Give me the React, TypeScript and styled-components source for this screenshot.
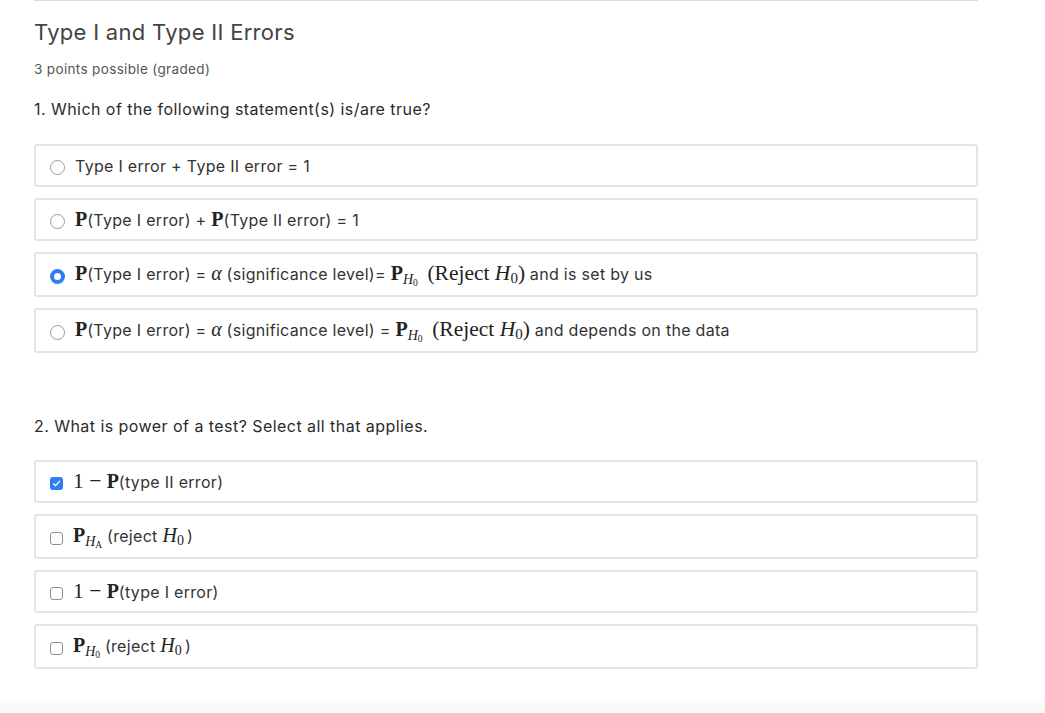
import React from 'react';
import styled, { createGlobalStyle } from 'styled-components';

const GlobalStyle = createGlobalStyle`
  html, body {
    margin: 0;
    padding: 0;
    background: #fff;
  }
  body {
    font-family: Inter, "Open Sans", "Liberation Sans", sans-serif;
    color: #333;
  }
`;

const Page = styled.div`
  width: 1045px;
  min-height: 713px;
  display: flex;
  flex-direction: column;
`;

const Problem = styled.div`
  width: 944px;
  margin-left: 34px;
  border-top: 1px solid #dcdcdc;
  padding-top: 17px;
  flex: 1;
`;

const Title = styled.h2`
  margin: 0;
  font-size: 22px;
  font-weight: 400;
  letter-spacing: 0.3px;
  line-height: 28px;
  color: #444;
`;

const Points = styled.div`
  margin-top: 14px;
  font-size: 13.5px;
  letter-spacing: 0.35px;
  line-height: 18px;
  color: #555;
`;

const Question = styled.p<{ $top: number }>`
  margin: ${({ $top }) => $top}px 0 0;
  font-size: 16px;
  letter-spacing: 0.45px;
  line-height: 20px;
  color: #2b2b2b;
`;

const Choices = styled.div<{ $top: number }>`
  margin-top: ${({ $top }) => $top}px;
  display: flex;
  flex-direction: column;
  gap: 11px;
`;

const Choice = styled.label<{ $tall?: boolean }>`
  display: flex;
  align-items: center;
  gap: 10px;
  box-sizing: border-box;
  height: ${({ $tall }) => ($tall ? 45 : 43)}px;
  padding: 0 14px;
  border: 2px solid #e4e4e4;
  border-radius: 3px;
  font-size: 16px;
  letter-spacing: 0.3px;
  color: #333;
  cursor: pointer;
`;

const Radio = styled.span<{ $on?: boolean }>`
  flex: none;
  box-sizing: border-box;
  width: 15px;
  height: 15px;
  border-radius: 50%;
  border: ${({ $on }) => ($on ? '4.5px solid #2f7cf6' : '1px solid #9a9a9a')};
  background: #fff;
  margin-top: 3px;
`;

const Box = styled.span<{ $on?: boolean }>`
  flex: none;
  box-sizing: border-box;
  width: 13px;
  height: 13px;
  border-radius: 3px;
  border: ${({ $on }) => ($on ? 'none' : '1px solid #8f8f8f')};
  background: ${({ $on }) => ($on ? '#2f7cf6' : '#fff')};
  display: flex;
  align-items: center;
  justify-content: center;
  margin-top: 4px;
`;

const Text = styled.span`
  display: block;
  white-space: pre;
  line-height: 24px;
`;

const M = styled.span<{ $big?: boolean }>`
  font-family: "Liberation Serif", "DejaVu Serif", serif;
  font-size: ${({ $big }) => ($big ? 21.5 : 20)}px;
  letter-spacing: 0;
  color: #222;
`;

const Bold = styled(M)`
  font-weight: 700;
`;

const It = styled(M)`
  font-style: italic;
`;

const Sub = styled.span`
  font-family: "Liberation Serif", "DejaVu Serif", serif;
  font-size: 14px;
  letter-spacing: 0;
  position: relative;
  top: 4px;
  color: #222;
`;

const SubIt = styled.span`
  font-style: italic;
`;

const Tiny = styled.span`
  font-size: 9.5px;
  font-style: normal;
  position: relative;
  top: 2px;
`;

const Zero = styled(M)`
  font-size: ${({ $big }) => ($big ? 15 : 14)}px;
  position: relative;
  top: 3px;
`;

const Footer = styled.div`
  height: 15px;
  background: linear-gradient(#fdfdfd, #f8f8f8);
`;

const Check = () => (
  <svg width="9" height="9" viewBox="0 0 10 10">
    <path d="M1.8 5.2 L4 7.4 L8.3 2.6" fill="none" stroke="#fff" strokeWidth="1.5" strokeLinecap="round" strokeLinejoin="round" />
  </svg>
);

const PH = ({ s }: { s: string }) => (
  <>
    <Bold>P</Bold>
    <Sub>
      <SubIt>H</SubIt>
      <Tiny>{s}</Tiny>
    </Sub>
  </>
);

const H0 = ({ big }: { big?: boolean }) => (
  <>
    <It $big={big}>H</It>
    <Zero $big={big}>0</Zero>
  </>
);

const App: React.FC = () => (
  <Page>
    <GlobalStyle />
    <Problem>
      <Title>Type I and Type II Errors</Title>
      <Points>3 points possible (graded)</Points>
      <Question $top={21}>1. Which of the following statement(s) is/are true?</Question>
      <Choices $top={25}>
        <Choice>
          <Radio />
          <Text>Type I error + Type II error = 1</Text>
        </Choice>
        <Choice>
          <Radio />
          <Text>
            <Bold>P</Bold>(Type I error) + <Bold>P</Bold>(Type II error) = 1
          </Text>
        </Choice>
        <Choice $tall>
          <Radio $on />
          <Text>
            <Bold>P</Bold>(Type I error) = <It>α</It> (significance level)= <PH s="0" />{'  '}<M $big>(Reject </M><H0 big /><M $big>)</M> and is set by us
          </Text>
        </Choice>
        <Choice $tall>
          <Radio />
          <Text>
            <Bold>P</Bold>(Type I error) = <It>α</It> (significance level) = <PH s="0" />{'  '}<M $big>(Reject </M><H0 big /><M $big>)</M> and depends on the data
          </Text>
        </Choice>
      </Choices>

      <Question $top={63}>2. What is power of a test? Select all that applies.</Question>
      <Choices $top={24}>
        <Choice>
          <Box $on><Check /></Box>
          <Text>
            <M $big>1 − </M><Bold>P</Bold>(type II error)
          </Text>
        </Choice>
        <Choice $tall>
          <Box />
          <Text>
            <PH s="A" /> (reject <H0 />{'\u2009'})
          </Text>
        </Choice>
        <Choice>
          <Box />
          <Text>
            <M $big>1 − </M><Bold>P</Bold>(type I error)
          </Text>
        </Choice>
        <Choice $tall>
          <Box />
          <Text>
            <PH s="0" /> (reject <H0 />{'\u2009'})
          </Text>
        </Choice>
      </Choices>
    </Problem>
    <Footer />
  </Page>
);

export default App;
